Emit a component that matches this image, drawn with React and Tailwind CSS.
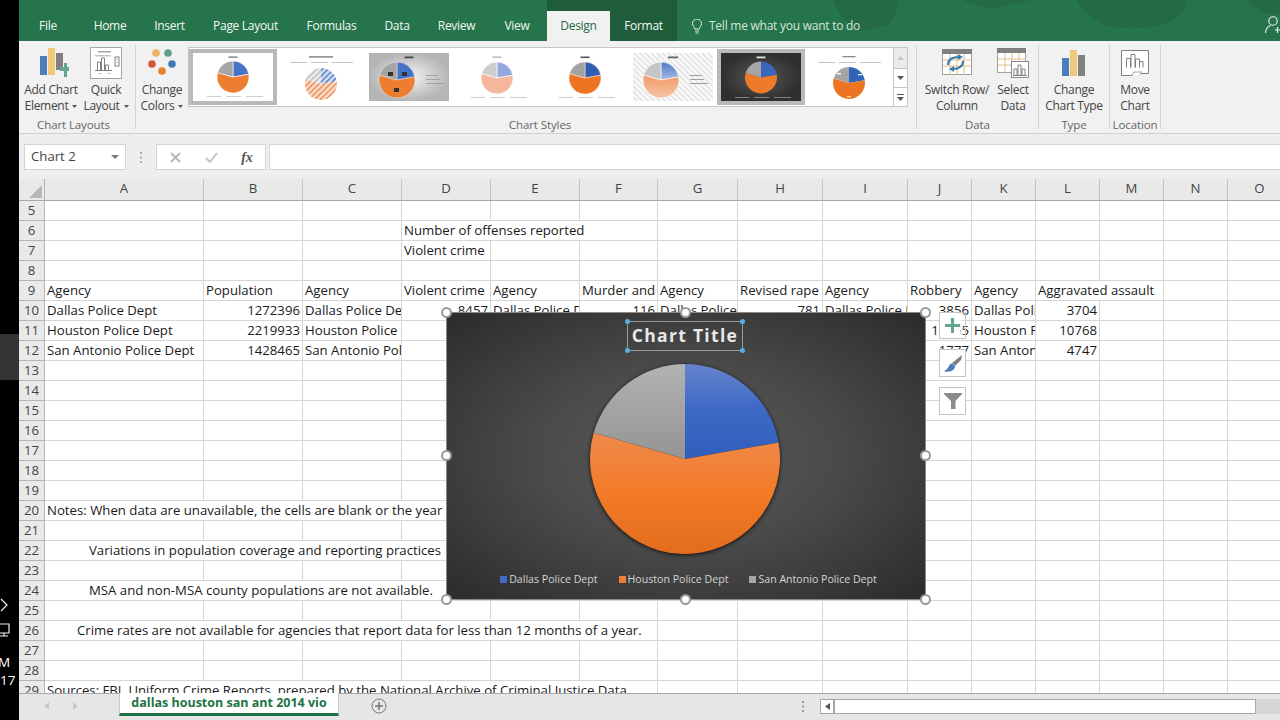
import React from "react";

const polar = (cx, cy, r, a) => {
  const t = ((a - 90) * Math.PI) / 180;
  return [cx + r * Math.cos(t), cy + r * Math.sin(t)];
};
const slice = (cx, cy, r, a0, a1) => {
  const [x0, y0] = polar(cx, cy, r, a0);
  const [x1, y1] = polar(cx, cy, r, a1);
  return `M${cx} ${cy}L${x0} ${y0}A${r} ${r} 0 ${a1 - a0 > 180 ? 1 : 0} 1 ${x1} ${y1}Z`;
};
const A1 = 80, A2 = 286;

function MiniPie({ cx, cy, r, blue = "#4472c4", orange = "#ed7d31", gray = "#a5a5a5", stroke = "none" }) {
  return (
    <g stroke={stroke} strokeWidth="0.6">
      <path d={slice(cx, cy, r, 0, A1)} fill={blue} />
      <path d={slice(cx, cy, r, A1, A2)} fill={orange} />
      <path d={slice(cx, cy, r, A2, 360)} fill={gray} />
    </g>
  );
}

function BottomLegend({ y = 44, color = "#c4c4c4" }) {
  return (
    <g fill={color}>
      <rect x={14} y={y} width={14} height={0.8} />
      <rect x={33} y={y} width={15} height={0.8} />
      <rect x={53} y={y} width={17} height={0.8} />
    </g>
  );
}
function TopLegend({ color = "#bbb" }) {
  return (
    <g fill={color}>
      <rect x={9} y={9} width={17} height={0.9} />
      <rect x={30} y={9} width={17} height={0.9} />
      <rect x={51} y={9} width={21} height={0.9} />
    </g>
  );
}
function RightLegend({ color = "#999" }) {
  return (
    <g fill={color}>
      <rect x={57} y={22} width={12} height={0.8} />
      <rect x={57} y={26} width={14} height={0.8} />
      <rect x={57} y={30} width={18} height={0.8} />
    </g>
  );
}
const Ttl = ({ x = 40, y = 4, w = 13, h = 1.6, c = "#666" }) => <rect x={x - w / 2} y={y} width={w} height={h} fill={c} />;

function Thumb({ selected, children }) {
  return (
    <div className={selected ? "w-[88px] h-14 -mx-1 shrink-0 border-4 border-[#b9b9b9] bg-white" : "w-20 h-12 shrink-0 bg-white"}>
      <svg viewBox="0 0 80 48" className="w-20 h-12 block">{children}</svg>
    </div>
  );
}

function Gallery() {
  return (
    <div className="flex h-[60px] w-[720px] border border-[#c6c6c6] bg-white">
      <div className="flex-1 flex items-center gap-2 pl-1 overflow-hidden">
        <Thumb selected>
          <rect width={80} height={48} fill="#fff" />
          <Ttl y={3.5} w={9} h={1.2} />
          <MiniPie cx={40} cy={24} r={16} stroke="#fff" />
          <BottomLegend y={43} />
        </Thumb>
        <Thumb>
          <defs>
            <pattern id="hatchO" width="4" height="4" patternUnits="userSpaceOnUse" patternTransform="rotate(45)">
              <rect width="4" height="4" fill="#fbdcc6" />
              <rect width="1.3" height="4" fill="#e8834a" />
            </pattern>
            <pattern id="hatchB" width="4" height="4" patternUnits="userSpaceOnUse" patternTransform="rotate(45)">
              <rect width="4" height="4" fill="#d5def2" />
              <rect width="1.3" height="4" fill="#4472c4" />
            </pattern>
            <pattern id="hatchG" width="4" height="4" patternUnits="userSpaceOnUse" patternTransform="rotate(45)">
              <rect width="4" height="4" fill="#ededed" />
              <rect width="1.3" height="4" fill="#b5b5b5" />
            </pattern>
          </defs>
          <rect width={80} height={48} fill="#fff" />
          <Ttl y={3} w={24} h={1.8} c="#999" />
          <TopLegend />
          <MiniPie cx={40} cy={31} r={16} blue="url(#hatchB)" orange="url(#hatchO)" gray="url(#hatchG)" />
        </Thumb>
        <Thumb>
          <defs>
            <radialGradient id="grayBg">
              <stop offset="0" stopColor="#f5f5f5" />
              <stop offset="1" stopColor="#b5b5b5" />
            </radialGradient>
          </defs>
          <rect width={80} height={48} fill="url(#grayBg)" />
          <Ttl x={40} y={3.5} w={9} h={1.8} c="#444" />
          <MiniPie cx={28} cy={27} r={18} stroke="#ddd" />
          <rect x={33} y={19} width={5} height={4} fill="#333" />
          <rect x={19} y={19} width={5} height={4} fill="#333" />
          <rect x={25} y={35} width={5} height={4} fill="#333" />
          <RightLegend />
        </Thumb>
        <Thumb>
          <rect width={80} height={48} fill="#fff" />
          <Ttl y={3.5} w={9} h={1.2} c="#aaa" />
          <MiniPie cx={40} cy={25} r={16} blue="#93a8de" orange="#f4b79b" gray="#cdcdcd" stroke="#fff" />
          <BottomLegend y={44} />
        </Thumb>
        <Thumb>
          <rect width={80} height={48} fill="#fff" />
          <Ttl y={3.5} w={9} h={1.6} c="#555" />
          <MiniPie cx={40} cy={25} r={16} blue="#2f5fb5" orange="#ed7420" gray="#a3a3a3" stroke="#fbdcc6" />
          <BottomLegend y={44} />
        </Thumb>
        <Thumb>
          <defs>
            <pattern id="stripe" width="4" height="4" patternUnits="userSpaceOnUse" patternTransform="rotate(-45)">
              <rect width="4" height="4" fill="#fbfbfb" />
              <rect width="1.5" height="4" fill="#dfdfdf" />
            </pattern>
            <linearGradient id="thB" x1="0" y1="0" x2="0" y2="1">
              <stop offset="0" stopColor="#4c77c8" />
              <stop offset="1" stopColor="#a9bde6" />
            </linearGradient>
            <linearGradient id="thO" x1="0" y1="0" x2="0" y2="1">
              <stop offset="0" stopColor="#f09a66" />
              <stop offset="1" stopColor="#f6c4a5" />
            </linearGradient>
          </defs>
          <rect width={80} height={48} fill="url(#stripe)" />
          <Ttl x={40} y={3.5} w={10} h={1.8} c="#666" />
          <MiniPie cx={28} cy={27} r={18} blue="url(#thB)" orange="url(#thO)" gray="#c5c5c5" stroke="#fff" />
          <RightLegend color="#888" />
        </Thumb>
        <Thumb selected>
          <defs>
            <radialGradient id="darkBg">
              <stop offset="0" stopColor="#585858" />
              <stop offset="1" stopColor="#2f2f2f" />
            </radialGradient>
          </defs>
          <rect width={80} height={48} fill="url(#darkBg)" />
          <Ttl y={3.5} w={9} h={1.8} c="#ddd" />
          <MiniPie cx={40} cy={24.5} r={16} blue="#3a66bd" orange="#ee7a2c" gray="#a5a5a5" />
          <BottomLegend y={44} color="#999" />
        </Thumb>
        <Thumb>
          <rect width={80} height={48} fill="#fff" />
          <Ttl y={3} w={13} h={1.3} c="#888" />
          <TopLegend />
          <MiniPie cx={40} cy={30} r={16} blue="#2f65b8" orange="#ed7420" gray="#a5a5a5" />
          <rect x={49} y={21} width={4} height={1.3} fill="#fff" />
          <rect x={28} y={20} width={4} height={1.3} fill="#fff" />
          <rect x={38} y={43} width={4} height={1.3} fill="#ffe7a8" />
        </Thumb>
      </div>
      <div className="w-[14px] shrink-0 flex flex-col border-l border-[#c6c6c6] text-[#555]">
        <div className="h-[21px] bg-[#ebebeb] border-b border-[#c6c6c6] flex items-center justify-center">
          <svg width="7" height="4"><path d="M0 4L3.5 0L7 4Z" fill="#c4c4c4" /></svg>
        </div>
        <div className="h-[19px] border-b border-[#c6c6c6] flex items-center justify-center">
          <svg width="7" height="4"><path d="M0 0L3.5 4L7 0Z" fill="#555" /></svg>
        </div>
        <div className="flex-1 flex items-center justify-center">
          <svg width="7" height="7"><rect width="7" height="1" fill="#555" /><path d="M0 3L3.5 7L7 3Z" fill="#555" /></svg>
        </div>
      </div>
    </div>
  );
}

const Caret = () => (
  <svg width="5" height="3" className="inline-block ml-1 align-middle"><path d="M0 0L2.5 3L5 0Z" fill="#555" /></svg>
);

function RibBtn({ w, icon, l1, l2, caret }) {
  return (
    <div className={`${w} shrink-0 flex flex-col items-center`}>
      <div className="h-[35px] flex items-center justify-center">{icon}</div>
      <div className="mt-[2px] text-center text-[12px] tracking-[-0.3px] leading-4 text-[#444] whitespace-nowrap">
        <div>{l1}</div>
        <div>{l2}{caret && <Caret />}</div>
      </div>
    </div>
  );
}

function Group({ label, className, labelClass = "", children }) {
  return (
    <div className={`${className} flex flex-col h-[84px] border-r border-[#d2d2d2] shrink-0`}>
      <div className="flex-1 flex">{children}</div>
      <div className={`-mb-[4px] text-center text-[11.5px] tracking-[-0.1px] leading-4 text-[#666] whitespace-nowrap ${labelClass}`}>{label}</div>
    </div>
  );
}

const AddChartIcon = (
  <svg width="29" height="30" viewBox="0 0 29 30" className="ml-[6px]">
    <rect x="0" y="8" width="7" height="19" fill="#4a7ebb" />
    <rect x="8" y="0" width="7" height="27" fill="#f0c87a" />
    <rect x="16" y="5" width="7" height="17" fill="#7f7f7f" />
    <path d="M20 17h4v-4h3v4h2v4h-2v6h-3v-6h-4z" fill="#63a58f" transform="translate(0 2)" />
  </svg>
);
const QuickIcon = (
  <svg width="32" height="32" viewBox="0 0 32 32" fill="none">
    <rect x="0.5" y="0.5" width="31" height="31" fill="#fff" stroke="#a5a5a5" />
    <rect x="8" y="4" width="13" height="1.5" fill="#a5a5a5" />
    <rect x="5" y="8" width="16" height="1.5" fill="#c5c5c5" />
    <path d="M5 23.5h17M7.500 23v-8h3v8M11.500 23V11h3v12M15.500 23v-5h3v5" stroke="#808080" />
    <rect x="25" y="10" width="4" height="9" stroke="#808080" />
    <rect x="26.5" y="12" width="1" height="1" fill="#808080" />
    <rect x="26.5" y="15" width="1" height="1" fill="#808080" />
    <rect x="8" y="26" width="4" height="1" fill="#c5c5c5" />
    <rect x="17" y="26" width="4" height="1" fill="#c5c5c5" />
  </svg>
);
const ColorsIcon = (
  <svg width="28" height="27" viewBox="0 0 28 27">
    <circle cx="8" cy="4" r="3.800" fill="#eab361" />
    <circle cx="20" cy="4" r="3.800" fill="#5f9e8c" />
    <circle cx="4" cy="15" r="3.800" fill="#d8553c" />
    <circle cx="24" cy="15" r="3.800" fill="#3f7ab8" />
    <circle cx="14" cy="22" r="3.800" fill="#e8802c" />
  </svg>
);
const SwitchIcon = (
  <svg width="30" height="27" viewBox="0 0 30 27" fill="none">
    <rect x="0.5" y="0.5" width="29" height="25" fill="#fff" stroke="#a0a0a0" />
    <rect x="0" y="0" width="30" height="5" fill="#808080" />
    <path d="M1 11h28M1 17h28M8 5v21M15 5v21M22 5v21" stroke="#e3bd8a" />
    <path d="M6 16c0-6 5-8 11-8" stroke="#3a7bb0" strokeWidth="2.2" />
    <path d="M16 5l5 3-5 3z" fill="#3a7bb0" />
    <path d="M21 12c0 5-4 8-10 8" stroke="#3a7bb0" strokeWidth="2.2" />
    <path d="M12 17l-5 3 5 3z" fill="#3a7bb0" />
  </svg>
);
const SelectIcon = (
  <svg width="32" height="30" viewBox="0 0 32 30" fill="none">
    <rect x="0.5" y="0.5" width="28" height="24" fill="#fff" stroke="#a0a0a0" />
    <rect x="0" y="0" width="29" height="5" fill="#808080" />
    <path d="M1 11h28M1 17h28M8 5v20M15 5v20M22 5v20" stroke="#e3bd8a" />
    <rect x="14.5" y="13.5" width="17" height="16" fill="#fff" stroke="#8a8a8a" />
    <path d="M17 27v-6h3v6M21 27V17h3v10M25 27v-6h3v6M16 27.500h14" stroke="#808080" />
  </svg>
);
const TypeIcon = (
  <svg width="24" height="28" viewBox="0 0 24 28">
    <rect x="0" y="9" width="7" height="18" fill="#4a7ebb" />
    <rect x="8" y="1" width="7" height="26" fill="#f0c87a" />
    <rect x="16" y="6" width="7" height="21" fill="#7f7f7f" />
  </svg>
);
const MoveIcon = (
  <svg width="28" height="26" viewBox="0 0 28 26" fill="none">
    <path d="M0.5 0.5h27v23H13l-2 2H0.5z" fill="#fff" stroke="#808080" />
    <path d="M11 25l2-3h8l-2 3" stroke="#a5a5a5" fill="#fff" />
    <path d="M5.500 17.500v-9h4v9M10 17.500V4.500h4v13M14.500 17.500V9h4v8.500" stroke="#808080" />
    <path d="M18.500 17.500V11.500h3.500v6" stroke="#808080" />
  </svg>
);

const Tab = ({ w, children }) => (
  <div className={`${w} shrink-0 flex items-center justify-center text-[12px] tracking-[-0.3px] text-[#f1f6f3]`}>{children}</div>
);

function TitleBar() {
  return (
    <div className="relative h-[41px] shrink-0 bg-[#26744b] flex items-stretch pt-[11px] overflow-hidden">
      <svg className="absolute left-0 top-0" width="1261" height="41" viewBox="0 0 1261 41">
        <g fill="#236a45">
          <path d="M814 0h66c-2 10-4 18-10 24-4 3-12 1-16 5-5 3-16 2-22-3-8-7-14-16-18-26z" />
          <path d="M942 0h68c-8 5-18 3-26 6-10 3-22 2-28-1z" />
          <path d="M1058 0h110c-2 12-12 20-22 24-16 5-50 6-62 0-12-6-22-14-26-24z" />
          <path d="M1228 0h33v15c-12 0-26-6-33-15z" />
        </g>
        <rect x="528" y="0" width="130" height="41" fill="#1f5c3a" />
      </svg>
      <div className="relative flex items-stretch">
        <Tab w="w-[58px]">File</Tab>
        <Tab w="w-[66px]">Home</Tab>
        <Tab w="w-[53px]">Insert</Tab>
        <Tab w="w-[99px]">Page Layout</Tab>
        <Tab w="w-[73px]">Formulas</Tab>
        <Tab w="w-[58px]">Data</Tab>
        <Tab w="w-[61px]">Review</Tab>
        <Tab w="w-[60px]">View</Tab>
        <div className="w-[63px] shrink-0 bg-[#f1f1f1] flex items-center justify-center text-[12px] tracking-[-0.3px] text-[#1f6b43]">Design</div>
        <Tab w="w-[67px]">Format</Tab>
        <div className="ml-[15px] flex items-center gap-[7px] text-[12px] tracking-[-0.25px] text-[#d4e6db]">
          <svg width="10" height="15" viewBox="0 0 10 15" fill="none" stroke="#e4efe8" strokeWidth="1">
            <path d="M2.800 10C2.500 8 .5 7 .5 4.500a4.500 4.500 0 0 1 9 0C9.500 7 7.500 8 7.200 10z" />
            <path d="M3 12h4M3.500 14h3" />
          </svg>
          <span className="whitespace-nowrap">Tell me what you want to do</span>
        </div>
      </div>
      <svg className="absolute right-0 top-[16px]" width="15" height="18" viewBox="0 0 15 18" fill="none" stroke="#f0f5f2" strokeWidth="1.100">
        <circle cx="8" cy="5" r="4.200" />
        <path d="M0.600 17c0-4 2-6.500 5-7.500M10 14h5M12.500 11v6" />
      </svg>
    </div>
  );
}

function Ribbon() {
  return (
    <div className="h-[93px] shrink-0 bg-[#f1f1f1] border-b border-[#d0d0d0] flex items-start pt-1">
      <Group label="Chart Layouts" className="w-[117px]" labelClass="pr-[7px]">
        <RibBtn w="w-[64px]" icon={AddChartIcon} l1="Add Chart" l2="Element" caret />
        <RibBtn w="w-[46px]" icon={QuickIcon} l1="Quick" l2="Layout" caret />
      </Group>
      <Group label="Chart Styles" className="w-[781px]" labelClass="pl-[28px]">
        <RibBtn w="w-[52px]" icon={ColorsIcon} l1="Change" l2="Colors" caret />
        <div className="pt-[2px]"><Gallery /></div>
      </Group>
      <Group label="Data" className="w-[122px]">
        <RibBtn w="w-[80px]" icon={SwitchIcon} l1="Switch Row/" l2="Column" />
        <RibBtn w="w-[32px]" icon={SelectIcon} l1="Select" l2="Data" />
      </Group>
      <Group label="Type" className="w-[71px]">
        <RibBtn w="w-[70px]" icon={TypeIcon} l1="Change" l2="Chart Type" />
      </Group>
      <Group label="Location" className="w-[51px]">
        <RibBtn w="w-[50px]" icon={MoveIcon} l1="Move" l2="Chart" />
      </Group>
    </div>
  );
}

function FormulaBar() {
  return (
    <div className="h-[45px] shrink-0 bg-[#eeeeee] flex items-start pt-[10px] pl-[5px] gap-0">
      <div className="w-[102px] h-[26px] bg-white border border-[#d4d4d4] flex items-center justify-between pl-[6px] pr-[6px] text-[13.2px] text-[#444]">
        <span>Chart 2</span>
        <svg width="8" height="4"><path d="M0 0L4 4L8 0Z" fill="#777" /></svg>
      </div>
      <div className="w-[30px] h-[26px] flex items-center justify-center">
        <svg width="2" height="11"><g fill="#b0b0b0"><rect width="2" height="2" /><rect y="4.500" width="2" height="2" /><rect y="9" width="2" height="2" /></g></svg>
      </div>
      <div className="w-[110px] h-[26px] bg-white border border-[#d4d4d4] flex items-center text-[#b5b5b5]">
        <div className="w-[36px] flex justify-center">
          <svg width="11" height="11" fill="none" stroke="#b8b8b8" strokeWidth="2"><path d="M1 1l9 9M10 1l-9 9" /></svg>
        </div>
        <div className="w-[36px] flex justify-center">
          <svg width="13" height="11" fill="none" stroke="#c4c4c4" strokeWidth="2"><path d="M1 6l4 4 7-9" /></svg>
        </div>
        <div className="w-[36px] text-center font-['Liberation_Serif',serif] italic text-[14px] text-[#555] font-bold">fx</div>
      </div>
      <div className="ml-[3px] flex-1 h-[26px] bg-white border border-[#d4d4d4] border-r-0" />
    </div>
  );
}

const COLS = "grid grid-cols-[26px_159px_99px_99px_89px_89px_78px_80px_85px_85px_64px_64px_64px_64px_64px_64px]";

function ColHeader() {
  const letters = "ABCDEFGHIJKLMNO".split("");
  return (
    <div className={`${COLS} h-[22px] shrink-0 bg-[#e9e9e9] border-b border-[#a8a8a8] text-[13.2px] text-[#444]`}>
      <div className="flex items-end justify-end pr-[2px] pb-[2px] border-r border-[#b5b5b5]">
        <svg width="13" height="13"><path d="M13 0V13H0Z" fill="#b8b8b8" /></svg>
      </div>
      {letters.map((l) => (
        <div key={l} className="flex items-center justify-center pb-[1px] border-r border-[#c4c4c4]">{l}</div>
      ))}
    </div>
  );
}

const blank = (n) => Array(n).fill("");
const rows = [
  [5, blank(15)],
  [6, [...blank(3), { t: "Number of offenses reported", s: "col-span-3" }, ...blank(9)]],
  [7, [...blank(3), "Violent crime", ...blank(11)]],
  [8, blank(15)],
  [9, ["Agency", "Population", "Agency", "Violent crime", "Agency", "Murder and", "Agency", "Revised rape", "Agency", "Robbery", "Agency", { t: "Aggravated assault", s: "col-span-2" }, ...blank(2)]],
  [10, ["Dallas Police Dept", { t: "1272396", r: 1 }, "Dallas Police Dept", { t: "8457", r: 1 }, "Dallas Police Dept", { t: "116", r: 1 }, "Dallas Police Dept", { t: "781", r: 1 }, "Dallas Police Dept", { t: "3856", r: 1 }, "Dallas Police Dept", { t: "3704", r: 1 }, ...blank(3)]],
  [11, ["Houston Police Dept", { t: "2219933", r: 1 }, "Houston Police Dept", { t: "22000", r: 1 }, "Houston Police Dept", { t: "303", r: 1 }, "Houston Police Dept", { t: "1200", r: 1 }, "Houston Police Dept", { t: "10055", r: 1 }, "Houston Police Dept", { t: "10768", r: 1 }, ...blank(3)]],
  [12, ["San Antonio Police Dept", { t: "1428465", r: 1 }, "San Antonio Police Dept", { t: "7500", r: 1 }, "San Antonio Police Dept", { t: "97", r: 1 }, "San Antonio Police Dept", { t: "900", r: 1 }, "San Antonio Police Dept", { t: "1777", r: 1 }, "San Antonio Police Dept", { t: "4747", r: 1 }, ...blank(3)]],
  ...[13, 14, 15, 16, 17, 18, 19].map((n) => [n, blank(15)]),
  [20, [{ t: "Notes: When data are unavailable, the cells are blank or the year is not reported.", s: "col-span-6" }, ...blank(9)]],
  [21, blank(15)],
  [22, [{ t: "Variations in population coverage and reporting practices", s: "col-span-6", p: "pl-[44px]" }, ...blank(9)]],
  [23, blank(15)],
  [24, [{ t: "MSA and non-MSA county populations are not available.", s: "col-span-4", p: "pl-[44px]" }, ...blank(11)]],
  [25, blank(15)],
  [26, [{ t: "Crime rates are not available for agencies that report data for less than 12 months of a year.", s: "col-span-6", p: "pl-[32px]" }, ...blank(9)]],
  [27, blank(15)],
  [28, blank(15)],
  [29, [{ t: "Sources: FBI, Uniform Crime Reports, prepared by the National Archive of Criminal Justice Data", s: "col-span-6" }, ...blank(9)]],
];

function Cell({ c }) {
  const o = typeof c === "string" ? { t: c } : c;
  return (
    <div className={`h-5 border-r border-b border-[#d6d6d6] whitespace-nowrap overflow-hidden leading-[19px] ${o.s || ""} ${o.r ? "text-right pr-[2px]" : o.p || "pl-[2px]"}`}>
      {o.t}
    </div>
  );
}

function Grid() {
  return (
    <div className="text-[13.2px] text-[#1a1a1a] bg-white">
      {rows.map(([n, cells]) => (
        <div key={n} className={COLS}>
          <div className="h-5 bg-[#e9e9e9] border-r border-b border-[#b5b5b5] text-[#444] text-center leading-[19px]">{n}</div>
          {cells.map((c, i) => <Cell key={i} c={c} />)}
        </div>
      ))}
    </div>
  );
}

function Handle({ className }) {
  return <div className={`absolute w-[11px] h-[11px] rounded-full bg-white border-2 border-[#9a9a9a] ${className}`} />;
}
function Dot({ className }) {
  return <div className={`absolute w-[5px] h-[5px] rounded-full bg-[#58aeea] ${className}`} />;
}

function Legend({ color, label }) {
  return (
    <div className="flex items-center gap-[2px]">
      <div className={`w-[7px] h-[7px] mt-[1px] ${color}`} />
      <span>{label}</span>
    </div>
  );
}

function Chart() {
  const R = 95, C = 105;
  return (
    <div className="absolute left-[427px] top-[133px] w-[480px] h-[288px]">
      <div className="w-full h-full border border-[#8a8a8a] bg-[radial-gradient(ellipse_at_center,#5a5a5a_0%,#4a4a4a_45%,#2b2b2b_100%)] flex flex-col items-center pt-[8px] pr-[2px]">
        <div className="relative w-[116px] h-[30px] pb-[2px] border border-[#9a9a9a] flex items-center justify-center text-[17.5px] font-bold tracking-[1.3px] text-[#e8e8e8] whitespace-nowrap">
          Chart Title
          <Dot className="-left-[3px] -top-[3px]" />
          <Dot className="-right-[3px] -top-[3px]" />
          <Dot className="-left-[3px] -bottom-[3px]" />
          <Dot className="-right-[3px] -bottom-[3px]" />
        </div>
        <svg width="210" height="210" viewBox="0 0 210 210" className="mt-[3px] shrink-0 drop-shadow-[0_1px_2px_rgba(0,0,0,0.8)]">
          <defs>
            <linearGradient id="gB" gradientUnits="userSpaceOnUse" x1="0" y1="10" x2="0" y2="105">
              <stop offset="0" stopColor="#6684cd" />
              <stop offset="0.45" stopColor="#3f6ac6" />
              <stop offset="1" stopColor="#2f5eba" />
            </linearGradient>
            <linearGradient id="gO" gradientUnits="userSpaceOnUse" x1="0" y1="80" x2="0" y2="200">
              <stop offset="0" stopColor="#ef8a4c" />
              <stop offset="0.5" stopColor="#f37a26" />
              <stop offset="1" stopColor="#e26d1d" />
            </linearGradient>
            <linearGradient id="gG" gradientUnits="userSpaceOnUse" x1="0" y1="10" x2="0" y2="105">
              <stop offset="0" stopColor="#b2b2b2" />
              <stop offset="1" stopColor="#949494" />
            </linearGradient>
          </defs>
          <path d={slice(C, C, R, 0, A1)} fill="url(#gB)" />
          <path d={slice(C, C, R, A2, 360)} fill="url(#gG)" />
          <path d={slice(C, C, R, A1, A2)} fill="url(#gO)" />
        </svg>
        <div className="mt-[7px] ml-[7px] flex items-center gap-[21px] text-[10.6px] leading-4 text-[#d4d4d4] whitespace-nowrap">
          <Legend color="bg-[#3f6ac6]" label="Dallas Police Dept" />
          <Legend color="bg-[#ed7d31]" label="Houston Police Dept" />
          <Legend color="bg-[#a5a5a5]" label="San Antonio Police Dept" />
        </div>
      </div>
      <Handle className="-left-[5px] -top-[5px]" />
      <Handle className="left-[234px] -top-[5px]" />
      <Handle className="-right-[5px] -top-[5px]" />
      <Handle className="-left-[5px] top-[138px]" />
      <Handle className="-right-[5px] top-[138px]" />
      <Handle className="-left-[5px] -bottom-[5px]" />
      <Handle className="left-[234px] -bottom-[5px]" />
      <Handle className="-right-[5px] -bottom-[5px]" />
      <div className="absolute left-[493px] top-0 flex flex-col gap-[10px]">
        <div className="w-[27px] h-[27px] bg-[linear-gradient(90deg,#fff_78%,rgba(255,255,255,0.2)_88%)] border border-[#c4c4c4] flex items-center justify-center">
          <svg width="15" height="15"><path d="M6 0h3v6h6v3H9v6H6V9H0V6h6z" fill="#63a58f" /></svg>
        </div>
        <div className="w-[27px] h-[28px] bg-white border border-[#c4c4c4] flex items-center justify-center">
          <svg width="18" height="17" viewBox="0 0 18 17">
            <path d="M18 0L17 5L11 11L8 8Z" fill="#7f7f7f" />
            <path d="M8 8.500C5 9 5 12 3 14L0 16.500C3 17 8 17 10 14C11.500 12.500 11 11 10.500 10.500Z" fill="#4a7ebb" />
          </svg>
        </div>
        <div className="w-[27px] h-[28px] bg-white border border-[#c4c4c4] flex items-center justify-center">
          <svg width="18" height="18" viewBox="0 0 18 18"><path d="M0 1h18v1l-6.500 7v8H7V9L0 2z" fill="#8a8a8a" /></svg>
        </div>
      </div>
    </div>
  );
}

function SheetBar() {
  return (
    <div className="h-[27px] shrink-0 bg-[#e6e6e6] border-t border-[#a8a8a8] flex items-start">
      <div className="w-[100px] h-[24px] flex items-center pl-[25px] gap-[24px]">
        <svg width="5" height="8"><path d="M5 0V8L0 4Z" fill="#c8c8c8" /></svg>
        <svg width="5" height="8"><path d="M0 0V8L5 4Z" fill="#c8c8c8" /></svg>
      </div>
      <div className="w-[220px] h-[23px] -mt-px bg-white border-b-[3px] border-[#217346] border-x border-x-[#c8c8c8] flex items-center justify-center text-[12.5px] font-bold text-[#217346] whitespace-nowrap">
        dallas houston san ant 2014 vio
      </div>
      <div className="ml-[32px] w-[17px] h-[24px] flex items-center">
        <svg width="16" height="16" viewBox="0 0 16 16" fill="none" stroke="#777"><circle cx="8" cy="8" r="7" /><path d="M8 4v8M4 8h8" strokeWidth="1.500" /></svg>
      </div>
      <div className="ml-[414px] h-[24px] flex items-center">
        <svg width="2" height="11"><g fill="#9a9a9a"><rect width="2" height="2" /><rect y="4.500" width="2" height="2" /><rect y="9" width="2" height="2" /></g></svg>
      </div>
      <div className="ml-[16px] mt-[5px] w-[436px] h-[15px] bg-white border border-[#a8a8a8] flex">
        <div className="w-[14px] border-r-2 border-[#a8a8a8] flex items-center justify-center">
          <svg width="5" height="7"><path d="M5 0V7L0 3.500Z" fill="#555" /></svg>
        </div>
      </div>
      <div className="mt-[5px] flex-1 h-[15px] bg-[#d6d6d6]" />
    </div>
  );
}

function SideStrip() {
  return (
    <div className="relative w-[19px] shrink-0 bg-black text-white overflow-hidden">
      <div className="absolute left-0 top-[334px] w-[19px] h-[46px] bg-[#333]" />
      <svg className="absolute left-0 top-[598px]" width="8" height="14" fill="none" stroke="#eee" strokeWidth="1.200"><path d="M1 1l6 6-6 6" /></svg>
      <svg className="absolute -left-[2px] top-[623px]" width="13" height="15" fill="none" stroke="#eee" strokeWidth="1.200"><path d="M0 1h11v9H0M6 10v3M2 13h8" /></svg>
      <div className="absolute -left-[2px] top-[653px] w-[16px] text-[13.500px] leading-[18px]">M<br /><span className="pl-[2px]">17</span></div>
    </div>
  );
}

export default function App() {
  return (
    <div className="w-[1280px] h-[720px] flex overflow-hidden bg-black font-['Open_Sans',sans-serif]">
      <SideStrip />
      <div className="flex-1 min-w-0 flex flex-col">
        <TitleBar />
        <Ribbon />
        <FormulaBar />
        <div className="relative flex-1 min-h-0 overflow-hidden">
          <ColHeader />
          <Grid />
          <Chart />
        </div>
        <SheetBar />
      </div>
    </div>
  );
}
